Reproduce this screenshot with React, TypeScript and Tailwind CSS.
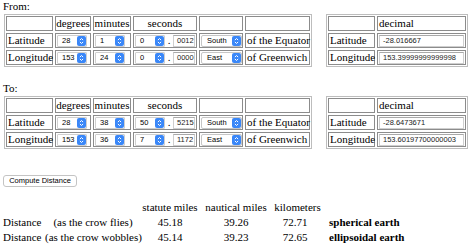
import type { ReactNode } from "react";

const sans = "font-['Liberation_Sans',sans-serif]";

function Arrows() {
  return (
    <svg width="9" height="10" viewBox="0 0 9 10" className="shrink-0">
      <rect width="9" height="10" rx="2" fill="#3a87f8" />
      <path
        d="M2.9 4.1 L4.5 2.5 L6.1 4.1 M2.9 5.9 L4.5 7.5 L6.1 5.9"
        fill="none"
        stroke="#fff"
        strokeWidth="1"
      />
    </svg>
  );
}

function NumBox({ v }: { v: string }) {
  return (
    <div
      className={`flex h-[12px] w-[30px] shrink-0 items-center justify-between rounded-[1px] border border-[#cfcfcf] bg-white pl-[4px] ${sans} text-[7.5px] leading-none`}
    >
      {v}
      <Arrows />
    </div>
  );
}

function TextBox({ v, w }: { v: string; w: string }) {
  return (
    <div
      className={`flex h-[12px] ${w} shrink-0 items-center overflow-hidden whitespace-nowrap border border-[#cfcfcf] border-t-[#a9a9a9] bg-white pl-[3px] ${sans} text-[7.5px] leading-none text-[#222]`}
    >
      {v}
    </div>
  );
}

function Select({ v }: { v: string }) {
  return (
    <div
      className={`flex h-[12px] w-[41px] shrink-0 items-center justify-between rounded-[2px] border border-[#c6c6c6] bg-white pl-[5px] ${sans} text-[7.5px] leading-none`}
    >
      {v}
      <Arrows />
    </div>
  );
}

function Cell({ children, className = "" }: { children?: ReactNode; className?: string }) {
  return (
    <div className={`flex items-center border border-[#8c8c8c] px-[1px] ${className}`}>
      {children}
    </div>
  );
}

type Point = {
  lat: [string, string, string, string, string];
  lon: [string, string, string, string, string];
};

function DmsTable({ p }: { p: Point }) {
  const row = (label: string, r: string[], of: string) => (
    <>
      <Cell>{label}</Cell>
      <Cell>
        <NumBox v={r[0]} />
      </Cell>
      <Cell>
        <NumBox v={r[1]} />
      </Cell>
      <Cell>
        <NumBox v={r[2]} />
        <span className="w-[8px] shrink-0 text-center">.</span>
        <TextBox v={r[3]} w="w-[22px]" />
      </Cell>
      <Cell>
        <Select v={r[4]} />
      </Cell>
      <Cell className="whitespace-nowrap">{of}</Cell>
    </>
  );
  return (
    <div className="grid grid-cols-[47px_36px_38px_64px_44px_65px] grid-rows-[15px_15px_15px] gap-[2px] border border-[#bdbdbd] p-[1px]">
      <Cell />
      <Cell className="justify-center">degrees</Cell>
      <Cell className="justify-center">minutes</Cell>
      <Cell className="justify-center">seconds</Cell>
      <Cell />
      <Cell />
      {row("Latitude", p.lat, "of the Equator")}
      {row("Longitude", p.lon, "of Greenwich")}
    </div>
  );
}

function DecTable({ lat, lon }: { lat: string; lon: string }) {
  return (
    <div className="grid grid-cols-[47px_89px] grid-rows-[15px_15px_15px] gap-[2px] border border-[#bdbdbd] p-[1px]">
      <Cell />
      <Cell>decimal</Cell>
      <Cell>Latitude</Cell>
      <Cell>
        <TextBox v={lat} w="w-full" />
      </Cell>
      <Cell>Longitude</Cell>
      <Cell>
        <TextBox v={lon} w="w-full" />
      </Cell>
    </div>
  );
}

function Section({ title, p, lat, lon }: { title: string; p: Point; lat: string; lon: string }) {
  return (
    <div>
      <div className="h-[13px]">{title}</div>
      <div className="ml-[1px] mt-[1px] flex gap-[14px]">
        <DmsTable p={p} />
        <DecTable lat={lat} lon={lon} />
      </div>
    </div>
  );
}

export default function App() {
  const from: Point = {
    lat: ["28", "1", "0", "0012", "South"],
    lon: ["153", "24", "0", "0000", "East"],
  };
  const to: Point = {
    lat: ["28", "38", "50", "5215", "South"],
    lon: ["153", "36", "7", "1172", "East"],
  };

  return (
    <div className="h-[247px] w-[474px] bg-white px-[3px] font-['Liberation_Serif',serif] text-[11px] leading-[13px] text-black">
      <Section title="From:" p={from} lat="-28.016667" lon="153.39999999999998" />
      <div className="mt-[15px]">
        <Section title="To:" p={to} lat="-28.6473671" lon="153.60197700000003" />
      </div>

      <button
        className={`mt-[26px] flex h-[12px] w-[74px] items-center justify-center rounded-[3px] border border-[#c4c4c4] bg-white ${sans} text-[7.5px] leading-none`}
      >
        Compute Distance
      </button>

      <div className="mt-[13px] grid grid-cols-[42px_96px_58px_74px_49px_auto] whitespace-nowrap leading-[15px]">
        <div />
        <div />
        <div className="text-center">statute miles</div>
        <div className="text-center">nautical miles</div>
        <div className="text-center">kilometers</div>
        <div />

        <div>Distance</div>
        <div className="text-center">(as the crow flies)</div>
        <div className="text-center">45.18</div>
        <div className="text-center">39.26</div>
        <div className="pr-[5px] text-center">72.71</div>
        <div className="pl-[7px] font-bold">spherical earth</div>

        <div>Distance</div>
        <div className="text-center">(as the crow wobbles)</div>
        <div className="text-center">45.14</div>
        <div className="text-center">39.23</div>
        <div className="pr-[5px] text-center">72.65</div>
        <div className="pl-[7px] font-bold">ellipsoidal earth</div>
      </div>
    </div>
  );
}
